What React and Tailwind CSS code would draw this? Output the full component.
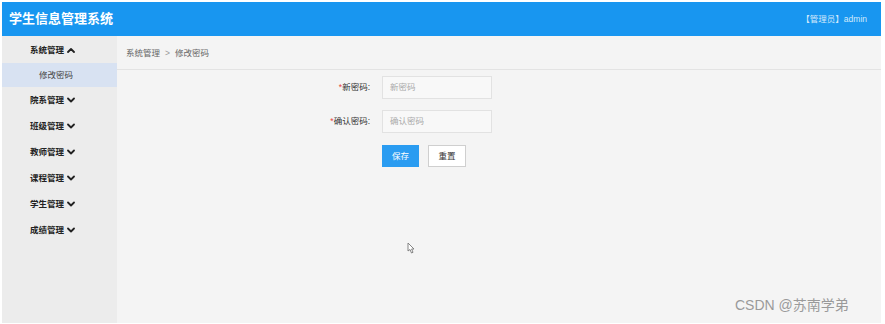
import React from 'react';

const font = { fontFamily: '"Liberation Sans", "Noto Sans CJK SC", sans-serif' };

// small bold chevron used in the side menu
const Chevron = ({ up }) => (
  <svg width="8" height="6" viewBox="0 0 8 6" className="ml-[3px]">
    <path
      d={up ? 'M1 5 L4 2 L7 5' : 'M1 1.5 L4 4.5 L7 1.5'}
      fill="none"
      stroke="#222"
      strokeWidth="1.8"
      strokeLinecap="round"
      strokeLinejoin="round"
    />
  </svg>
);

const menus = ['院系管理', '班级管理', '教师管理', '课程管理', '学生管理', '成绩管理'];

export default function App() {
  return (
    <div
      className="relative w-[885px] h-[324px] bg-white pt-[2px] pl-[2px] pr-[4px] pb-[1px] overflow-hidden"
      style={font}
    >
      <div className="flex flex-col h-full">
        {/* top bar */}
        <div className="h-[34px] bg-[#1896f0] flex items-center justify-between pl-[7px] pr-[14px]">
          <h1 className="text-[13px] font-bold text-white">学生信息管理系统</h1>
          <span className="text-[8.5px] text-[#d3e9fb]">【管理员】admin</span>
        </div>

        <div className="flex flex-1">
          {/* side menu */}
          <div className="w-[115px] bg-[#ececec] pt-[1px] text-[8.5px] font-bold text-[#222]">
            <div className="h-[26px] flex items-center pl-[28px]">
              系统管理
              <Chevron up />
            </div>
            <div className="h-[24px] flex items-center pl-[37px] bg-[#d8e2f2] font-normal text-[#444]">
              修改密码
            </div>
            {menus.map((m) => (
              <div key={m} className="h-[26px] flex items-center pl-[28px]">
                {m}
                <Chevron />
              </div>
            ))}
          </div>

          {/* main */}
          <div className="flex-1 bg-[#f4f4f4]">
            <div className="h-[34px] border-b border-[#e3e3e3] flex items-center pl-[9px] pt-[1px] text-[8.5px] text-[#666]">
              系统管理
              <span className="mx-[5px] text-[#999]">&gt;</span>
              修改密码
            </div>

            <div className="ml-[113px] mt-[6px] flex flex-col gap-[11px] text-[8.5px]">
              <div className="flex items-center">
                <label className="w-[140px] text-right text-[#333]">
                  <span className="text-[#e64340]">*</span>新密码:
                </label>
                <div className="ml-[12px] w-[110px] h-[23px] border border-[#e2e2e2] bg-[#f8f8f8] flex items-center pl-[7px] text-[#aaa]">
                  新密码
                </div>
              </div>
              <div className="flex items-center">
                <label className="w-[140px] text-right text-[#333]">
                  <span className="text-[#e64340]">*</span>确认密码:
                </label>
                <div className="ml-[12px] w-[110px] h-[23px] border border-[#e2e2e2] bg-[#f8f8f8] flex items-center pl-[7px] text-[#aaa]">
                  确认密码
                </div>
              </div>
              <div className="flex ml-[152px] mt-[1px]">
                <button className="w-[37px] h-[22px] bg-[#2a9cf1] text-white">保存</button>
                <button className="ml-[9px] w-[38px] h-[22px] bg-white border border-[#cfcfcf] text-[#333]">
                  重置
                </button>
              </div>
            </div>
          </div>
        </div>
      </div>

      {/* mouse pointer in the screenshot */}
      <svg className="absolute left-[407px] top-[242px]" width="8" height="12" viewBox="0 0 8 12">
        <path d="M1 1 L1 9 L3 7.5 L4.5 11 L6 10.3 L4.6 7 L7 7 Z" fill="#fff" stroke="#777" strokeWidth="0.9" />
      </svg>

      {/* watermark */}
      <div className="absolute left-[735px] top-[295px] text-[14px] text-[#9a9a9a]">CSDN @苏南学弟</div>
    </div>
  );
}
